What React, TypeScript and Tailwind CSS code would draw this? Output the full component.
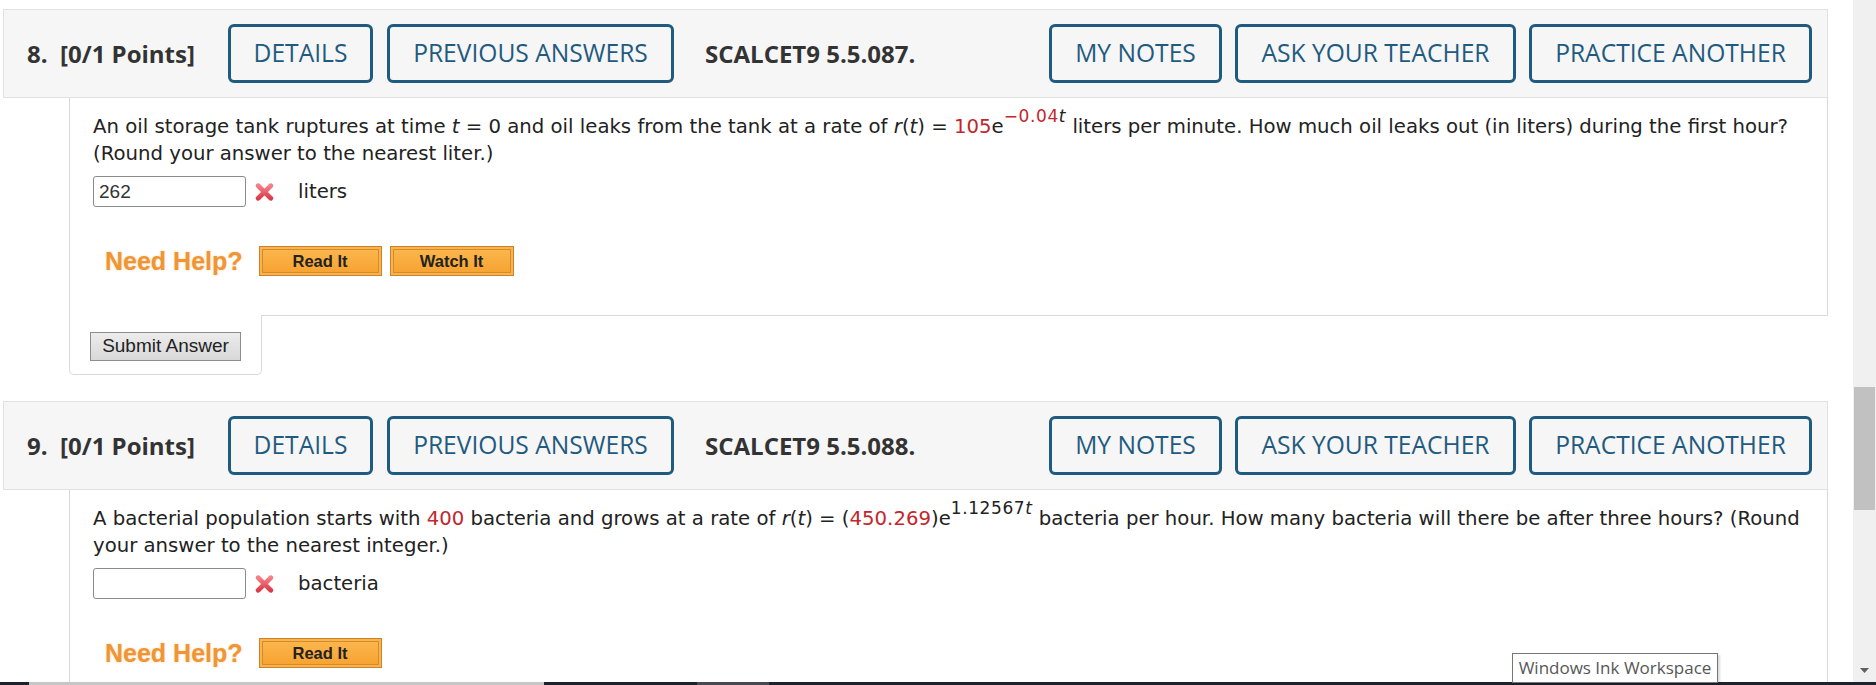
import type { ReactNode } from 'react'

const body = "font-['DejaVu_Sans',Verdana,sans-serif]"
const arial = "font-['Liberation_Sans',Arial,sans-serif]"
const red = 'text-[#c1272d]'

function NavButton({ label, width }: { label: string; width: string }) {
  return (
    <span
      className={`${width} flex h-[59px] items-center justify-center rounded-[6px] border-[3px] border-[#1f5b7e] text-[24.6px] text-[#1f5a80]`}
    >
      {label}
    </span>
  )
}

function WrongMark() {
  return (
    <svg width="19" height="18" viewBox="0 0 19 18" className="shrink-0">
      <defs>
        <linearGradient id="xg" x1="0" y1="0" x2="0" y2="1">
          <stop offset="0" stopColor="#f3808a" />
          <stop offset="1" stopColor="#dc3c4a" />
        </linearGradient>
      </defs>
      <path d="M3.2 2.8 L15.8 15.2 M15.8 2.8 L3.2 15.2" stroke="url(#xg)" strokeWidth="4.8" strokeLinecap="round" />
    </svg>
  )
}

function HelpButton({ label, width }: { label: string; width: string }) {
  return (
    <span
      className={`${width} ${arial} flex h-[30px] items-center justify-center border border-[#c98130] bg-gradient-to-b from-[#fcb84e] to-[#f6a12e] text-[16.5px] font-bold text-[#222] shadow-[inset_0_0_0_2px_#fbb448,inset_0_0_0_3px_#d48a30]`}
    >
      {label}
    </span>
  )
}

function Sup({ children }: { children: ReactNode }) {
  return <sup className="top-[-0.62em] text-[17px] tracking-[0.6px]">{children}</sup>
}

interface QuestionProps {
  num: number
  code: string
  children: ReactNode
  value: string
  unit: string
  watch?: boolean
  submit?: boolean
}

function Question({ num, code, children, value, unit, watch, submit }: QuestionProps) {
  return (
    <section>
      <div className="flex h-[89px] items-center border border-[#e1e1e1] bg-[#f6f6f6] pl-[23px] pr-[15px] font-['Open_Sans',sans-serif] text-[24px]">
        <span className="w-[170px] whitespace-pre font-bold text-[#333]">{num}.  [0/1 Points]</span>
        <div className="ml-[31px] flex gap-[14px]">
          <NavButton label="DETAILS" width="w-[145px]" />
          <NavButton label="PREVIOUS ANSWERS" width="w-[287px]" />
        </div>
        <span className="ml-[31px] font-bold text-[#333]">{code}</span>
        <div className="ml-auto flex gap-[13px]">
          <NavButton label="MY NOTES" width="w-[173px]" />
          <NavButton label="ASK YOUR TEACHER" width="w-[281px]" />
          <NavButton label="PRACTICE ANOTHER" width="w-[283px]" />
        </div>
      </div>

      <div className={`${body} ml-[66px] border-x border-[#d9d9d9] pb-[39px] pl-[23px] pr-[20px] pt-[15px] text-[19.7px] leading-[27px] text-[#222]`}>
        <p>{children}</p>
        <div className="mt-[9px] flex items-center">
          <span className={`${arial} flex h-[31px] w-[153px] items-center rounded-[3px] border border-[#8a8a8a] px-[5px] text-[19px] text-[#333]`}>
            {value}
          </span>
          <span className="ml-[9px]">
            <WrongMark />
          </span>
          <span className="ml-[24px]">{unit}</span>
        </div>
        <div className="ml-[12px] mt-[39px] flex items-center gap-[16px]">
          <span className={`${arial} text-[25px] font-bold text-[#f09535] [text-shadow:0_0_2px_rgba(246,170,80,0.6)]`}>
            Need Help?
          </span>
          <div className="flex gap-[8px]">
            <HelpButton label="Read It" width="w-[123px]" />
            {watch && <HelpButton label="Watch It" width="w-[124px]" />}
          </div>
        </div>
      </div>

      {submit && (
        <div className="ml-[66px] flex">
          <div className="h-[60px] w-[193px] rounded-b-[5px] border-x border-b border-[#d9d9d9] pl-[20px] pt-[17px]">
            <span className={`${arial} flex h-[29px] w-[151px] items-center justify-center border border-[#8c8c8c] bg-gradient-to-b from-[#ececec] to-[#d8d8d8] text-[19px] text-[#222]`}>
              Submit Answer
            </span>
          </div>
          <div className="flex-1 border-t border-[#d9d9d9]" />
        </div>
      )}
    </section>
  )
}

export default function App() {
  return (
    <div className="relative flex h-[685px] w-[1876px] flex-col overflow-hidden bg-white">
      <div className="flex min-h-0 flex-1">
        <main className="min-w-0 flex-1 overflow-hidden pl-[3px] pr-[25px] pt-[9px]">
          <Question num={8} code="SCALCET9 5.5.087." value="262" unit="liters" watch submit>
            An oil storage tank ruptures at time <i>t</i> = 0 and oil leaks from the tank at a rate of <i>r</i>(<i>t</i>) ={' '}
            <span className={red}>105</span>e
            <Sup>
              <span className={red}>−0.04</span>
              <i>t</i>
            </Sup>{' '}
            liters per minute. How much oil leaks out (in liters) during the first hour?
            <br />
            (Round your answer to the nearest liter.)
          </Question>
          <div className="mt-[26px]">
            <Question num={9} code="SCALCET9 5.5.088." value="" unit="bacteria">
              A bacterial population starts with <span className={red}>400</span> bacteria and grows at a rate of{' '}
              <i>r</i>(<i>t</i>) = (<span className={red}>450.269</span>)e
              <Sup>
                1.12567<i>t</i>
              </Sup>{' '}
              bacteria per hour. How many bacteria will there be after three hours? (Round
              <br />
              your answer to the nearest integer.)
            </Question>
          </div>
        </main>

        {/* scrollbar */}
        <div className="flex w-[23px] flex-col items-center bg-[#f0f0f0]">
          <div className="mt-[387px] h-[123px] w-[21px] bg-[#c1c1c1]" />
          <svg width="9" height="5" viewBox="0 0 9 5" className="mb-[9px] mt-auto">
            <path d="M0 0 H9 L4.5 5 Z" fill="#606060" />
          </svg>
        </div>
      </div>

      {/* taskbar edge */}
      <div className="flex h-[3px]">
        <div className="w-[29px] bg-[#1b232d]" />
        <div className="w-[515px] bg-[#c6c6c6]" />
        <div className="w-[153px] bg-[#1b232d]" />
        <div className="w-[72px] bg-[#474b51]" />
        <div className="flex-1 bg-[#1b232d]" />
      </div>

      <div className="absolute left-[1512px] top-[653px] flex h-[30px] w-[206px] items-center justify-center border border-[#767676] bg-white font-['Open_Sans',sans-serif] text-[17px] text-[#575757] shadow-[2px_2px_2px_rgba(0,0,0,0.15)]">
        Windows Ink Workspace
      </div>
    </div>
  )
}
